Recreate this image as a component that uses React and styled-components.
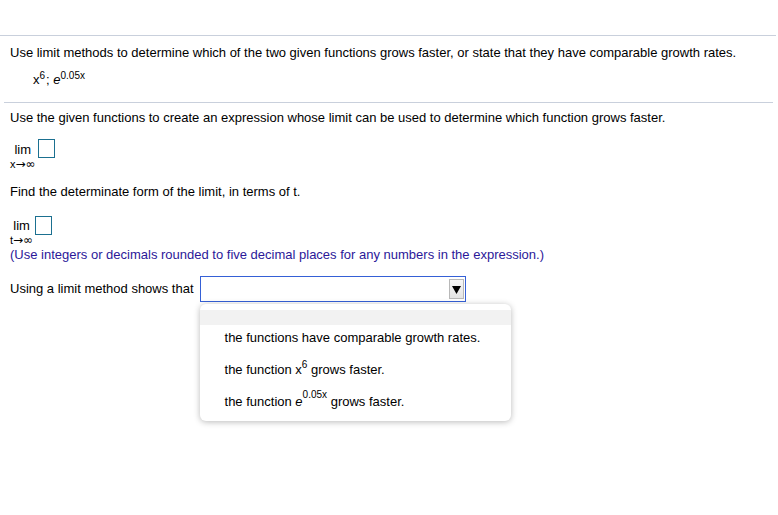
import React from "react";
import styled, { createGlobalStyle } from "styled-components";

const GlobalStyle = createGlobalStyle`
  html, body {
    height: 100%;
  }
  body {
    margin: 0;
    background: #fff;
    color: #000;
    font-family: "Liberation Sans", Arial, sans-serif;
    font-size: 13px;
    line-height: 16px;
  }
`;

const Page = styled.div`
  box-sizing: border-box;
  width: 776px;
  min-height: 515px;
  padding-top: 35px;
`;

const Question = styled.div`
  border-top: 1px solid #c9d0dc;
`;

const Prompt = styled.section`
  padding: 9px 10px 14px;
`;

const Functions = styled.div`
  margin-top: 11px;
  padding-left: 23px;
`;

const Sup = styled.span`
  font-size: 10px;
  line-height: 0;
  vertical-align: ${(p) => p.$raise || 5}px;
  margin-left: ${(p) => p.$gap || 0}px;
  margin-right: ${(p) => p.$after || 0}px;
`;

const Em = styled.i`
  font-style: italic;
`;

const Rule = styled.hr`
  border: 0;
  height: 1px;
  margin: 0 3px 0 4px;
  background: #c9d0dc;
`;

const Work = styled.section`
  padding: 7px 10px 0;
`;

const Text = styled.div`
  margin-top: ${(p) => p.$top || 0}px;
  color: ${(p) => (p.$note ? "#2b1899" : "#000")};
`;

const LimRow = styled.div`
  display: flex;
  align-items: flex-start;
  gap: 2px;
  margin-top: ${(p) => p.$top}px;
`;

const LimStack = styled.div`
  display: flex;
  flex-direction: column;
  align-items: center;
`;

const Lim = styled.span`
  line-height: 16px;
`;

const Under = styled.span`
  font-size: 11px;
  line-height: 12px;
  white-space: nowrap;
`;

const Sym = styled.span`
  font-family: "DejaVu Sans", sans-serif;
  font-size: 12px;
  line-height: 12px;
`;

const AnswerBox = styled.span`
  box-sizing: border-box;
  width: 17px;
  height: 19px;
  margin-top: ${(p) => p.$shift}px;
  border: 1px solid #1b7090;
  background: #fff;
`;

const AnswerRow = styled.div`
  display: flex;
  align-items: center;
  gap: 6px;
  margin-top: 13px;
`;

const SelectWrap = styled.div`
  position: relative;
`;

const Select = styled.div`
  box-sizing: border-box;
  width: 266px;
  height: 26px;
  border: 1px solid #3560d6;
  display: flex;
  align-items: center;
  justify-content: flex-end;
  padding-right: 1px;
`;

const ArrowButton = styled.span`
  box-sizing: border-box;
  width: 15px;
  height: 20px;
  border: 1px solid #b8b8b8;
  background: linear-gradient(#f7f7f7, #e4e4e4);
  display: flex;
  align-items: center;
  justify-content: center;
`;

const Menu = styled.div`
  position: absolute;
  z-index: 2;
  top: calc(100% + 2px);
  left: 0;
  width: 311px;
  padding-top: 6px;
  background: #fff;
  border-radius: 6px;
  box-shadow: 0 1px 6px rgba(0, 0, 0, 0.28);
  overflow: hidden;
`;

const BlankOption = styled.div`
  height: 15px;
  background: #f2f2f2;
`;

const Option = styled.div`
  padding: 5px 24px 11px 25px;
  white-space: nowrap;
`;

const Limit = ({ variable, shift, top }) => (
  <LimRow $top={top}>
    <LimStack>
      <Lim>lim</Lim>
      <Under>
        {variable}
        <Sym>→∞</Sym>
      </Under>
    </LimStack>
    <AnswerBox $shift={shift} />
  </LimRow>
);

const App = () => {
  return (
    <>
      <GlobalStyle />
      <Page>
        <Question>
          <Prompt>
            <Text>
              Use limit methods to determine which of the two given functions
              grows faster, or state that they have comparable growth rates.
            </Text>
            <Functions>
              x<Sup $after={1}>6</Sup>; <Em>e</Em>
              <Sup>0.05x</Sup>
            </Functions>
          </Prompt>
          <Rule />
          <Work>
            <Text>
              Use the given functions to create an expression whose limit can
              be used to determine which function grows faster.
            </Text>
            <Limit variable="x" shift={-3} top={16} />
            <Text $top={14}>
              Find the determinate form of the limit, in terms of t.
            </Text>
            <Limit variable="t" shift={-2} top={18} />
            <Text $top={1} $note>
              (Use integers or decimals rounded to five decimal places for any
              numbers in the expression.)
            </Text>
            <AnswerRow>
              <span>Using a limit method shows that</span>
              <SelectWrap>
                <Select>
                  <ArrowButton>
                    <svg width="9" height="9" viewBox="0 0 9 9">
                      <polygon points="0,1 9,1 4.5,9" fill="#000" />
                    </svg>
                  </ArrowButton>
                </Select>
                <Menu>
                  <BlankOption />
                  <Option>the functions have comparable growth rates.</Option>
                  <Option>
                    the function x<Sup $raise={6}>6</Sup> grows faster.
                  </Option>
                  <Option>
                    the function <Em>e</Em>
                    <Sup $raise={8}>0.05x</Sup> grows faster.
                  </Option>
                </Menu>
              </SelectWrap>
            </AnswerRow>
          </Work>
        </Question>
      </Page>
    </>
  );
};

export default App;
